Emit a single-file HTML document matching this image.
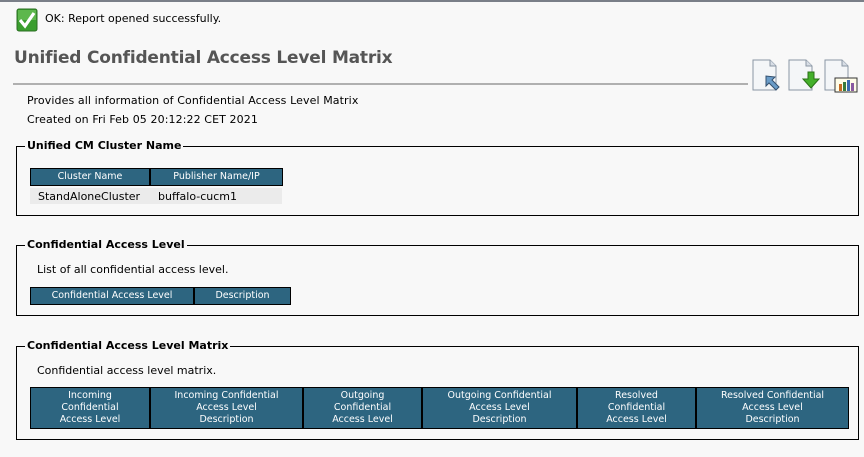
<!DOCTYPE html>
<html><head><meta charset="utf-8"><style>
*{margin:0;padding:0;box-sizing:border-box}
body{width:864px;height:457px;background:#f8f8f8;font-family:"DejaVu Sans","Liberation Sans",sans-serif;font-size:11px;color:#000;position:relative;overflow:hidden}
.a{position:absolute;white-space:nowrap}
.fs{position:absolute;border:1px solid #000}
.lg{position:absolute;background:#f8f8f8;font-weight:bold;font-size:11px;padding:0 2px;top:-8px;left:8px;line-height:14px}
.t{position:absolute;display:flex;border:1px solid #000;background:#000;gap:2px}
.t div{background:#2d6580;color:#fff;font-size:9.5px;text-align:center;line-height:12px;display:flex;align-items:center;justify-content:center}
</style></head><body>
<div class="a" style="left:0;top:0;width:864px;height:2px;background:#7a7f88"></div>
<svg class="a" style="left:16px;top:8px" width="22" height="24" viewBox="0 0 22 24"><rect x="1" y="1" width="20" height="22" rx="2" fill="#3a9e2e" stroke="#2a6e22"/><rect x="2" y="2" width="18" height="10" fill="#7fcf6a" opacity=".5"/><path d="M4 12 L9 18 L18 5" stroke="#fff" stroke-width="3.2" fill="none"/></svg>
<div class="a" style="left:45px;top:12px;font-size:11px">OK: Report opened successfully.</div>
<div class="a" style="left:14px;top:48px;font-size:17px;font-weight:bold;color:#555;font-family:'DejaVu Sans',sans-serif;letter-spacing:-0.2px">Unified Confidential Access Level Matrix</div>
<div class="a" style="left:13px;top:83px;width:735px;height:2px;background:#b0b0b0"></div>
<svg class="a" style="left:752px;top:59px" width="110" height="34" viewBox="0 0 110 34">
<g fill="#f4f6f8" stroke="#8a96a4"><path d="M1 1h17l6 6v24H1z"/><path d="M37 1h17l6 6v24H37z"/><path d="M73 1h17l6 6v24H73z"/></g>
<g fill="#d8dee6" stroke="#8a96a4"><path d="M18 1v6h6"/><path d="M54 1v6h6"/><path d="M90 1v6h6"/></g>
<path d="M14 17 l0 10 3-3 7 7 3-3-7-7 3-3z" fill="#6a9cc8" stroke="#34506e"/>
<path d="M51 20h5v-7h6v7h5l-8 9z" fill="#44b02a" stroke="#2a7018"/>
<rect x="83" y="19" width="22" height="14" fill="#fffde8" stroke="#333"/>
<rect x="87" y="25" width="3" height="7" fill="#c86a20"/><rect x="91" y="23" width="3" height="9" fill="#3a7a3a"/><rect x="95" y="21" width="3" height="11" fill="#3a6ab0"/><rect x="99" y="24" width="3" height="8" fill="#8a5aa0"/>
</svg>
<div class="a" style="left:27px;top:94px;letter-spacing:0.1px">Provides all information of Confidential Access Level Matrix</div>
<div class="a" style="left:27px;top:113px;letter-spacing:0.1px">Created on Fri Feb 05 20:12:22 CET 2021</div>

<div class="fs" style="left:16px;top:146px;width:843px;height:70px"><div class="lg">Unified CM Cluster Name</div></div>
<div class="t" style="left:30px;top:168px;width:253px;height:18px"><div style="width:118px">Cluster Name</div><div style="flex:1">Publisher Name/IP</div></div>
<div class="a" style="left:30px;top:188px;width:252px;height:16px;background:#ebebeb"></div>
<div class="a" style="left:38px;top:190px">StandAloneCluster</div>
<div class="a" style="left:158px;top:190px">buffalo-cucm1</div>

<div class="fs" style="left:16px;top:245px;width:843px;height:71px"><div class="lg">Confidential Access Level</div></div>
<div class="a" style="left:37px;top:263px">List of all confidential access level.</div>
<div class="t" style="left:30px;top:287px;width:261px;height:18px"><div style="width:162px">Confidential Access Level</div><div style="flex:1">Description</div></div>

<div class="fs" style="left:16px;top:346px;width:843px;height:94px"><div class="lg">Confidential Access Level Matrix</div></div>
<div class="a" style="left:37px;top:364px">Confidential access level matrix.</div>
<div class="t" style="left:30px;top:387px;width:819px;height:42px">
<div style="width:118px">Incoming<br>Confidential<br>Access Level</div>
<div style="width:151px">Incoming Confidential<br>Access Level<br>Description</div>
<div style="width:117px">Outgoing<br>Confidential<br>Access Level</div>
<div style="width:153px">Outgoing Confidential<br>Access Level<br>Description</div>
<div style="width:117px">Resolved<br>Confidential<br>Access Level</div>
<div style="flex:1">Resolved Confidential<br>Access Level<br>Description</div>
</div>
</body></html>
